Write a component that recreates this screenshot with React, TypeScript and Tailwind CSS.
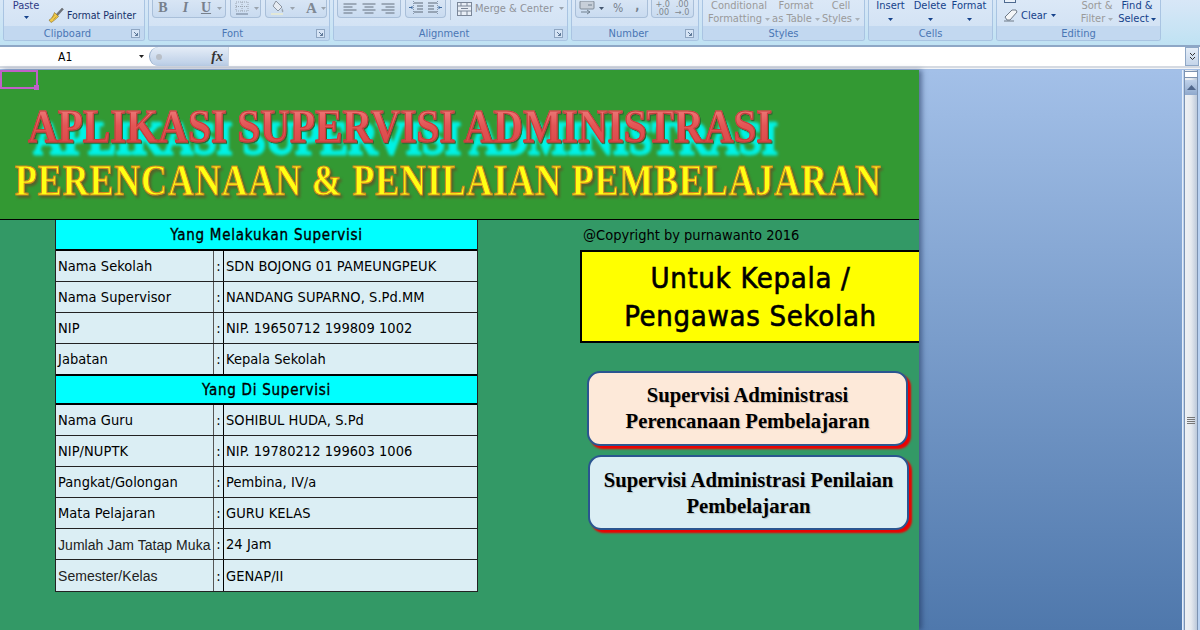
import React from "react";

const tahoma = "font-['DejaVu_Sans_Condensed','DejaVu_Sans',sans-serif]";

function Caret({ c = "#15428b", className = "" }: { c?: string; className?: string }) {
  return (
    <svg width="5" height="3" viewBox="0 0 5 3" className={className}>
      <path d="M0 0h5L2.5 3z" fill={c} />
    </svg>
  );
}

function Launcher() {
  return (
    <svg width="9" height="9" viewBox="0 0 9 9" className="mr-[4px] shrink-0">
      <rect x="0.5" y="0.5" width="8" height="8" fill="#d6e4f5" stroke="#8fa6c2" />
      <path d="M3 3l3.5 3.5M6.5 4v2.5H4" stroke="#5d7898" fill="none" />
    </svg>
  );
}

function Group({ w, label, launcher, children }: { w: string; label: string; launcher?: boolean; children?: React.ReactNode }) {
  return (
    <div className={`${w} h-[41px] flex flex-col shrink-0 rounded-b-[3px] border border-t-0 border-[#a9c4e2] bg-gradient-to-b from-[#dbe8f7] to-[#cfe0f3] overflow-hidden`}>
      <div className="h-[26px] relative flex">{children}</div>
      <div className="h-[14px] bg-[#c2d8f0] flex items-center">
        <span className="flex-1 text-center text-[#4a76b4] text-[11px] leading-[14px] mt-[1px]">{label}</span>
        {launcher && <Launcher />}
      </div>
    </div>
  );
}

function ToolGroup({ w, className = "", children }: { w: string; className?: string; children?: React.ReactNode }) {
  return (
    <div className={`${w} h-[19px] -mt-px flex items-center rounded-b-[4px] border border-t-0 border-[#a9bfd9] bg-gradient-to-b from-[#d9e6f5] to-[#c9dbf0] shrink-0 ${className}`}>
      {children}
    </div>
  );
}

function Lines({ kind }: { kind: "left" | "center" | "right" }) {
  const rows = [0, 1, 2, 3];
  const d = rows.map((i) => {
    const long = i % 2 === 0;
    const len = long ? 13 : 9;
    const x = kind === "left" ? 0.5 : kind === "right" ? 13.5 - len : 7 - len / 2;
    return `M${x} ${2 + i * 3}h${len}`;
  }).join("");
  return (
    <svg width="14" height="13" viewBox="0 0 14 13" className="shrink-0">
      <path d={d} stroke="#65707e" strokeWidth="1" fill="none" />
    </svg>
  );
}

function Indent({ flip }: { flip?: boolean }) {
  return (
    <svg width="15" height="14" viewBox="0 0 15 14" className={`shrink-0 ${flip ? "-scale-x-100" : ""}`}>
      <path d="M5 2h9M8 5h6M8 8h6M5 11h9" stroke="#5f6a78" fill="none" />
      <path d="M4.5 0v14" stroke="#8798ad" strokeDasharray="1 1" />
      <path d="M0 6.5h3M3 5v3" stroke="#3f6aa0" fill="none" />
    </svg>
  );
}

function Ribbon() {
  return (
    <div className={`h-[45px] flex bg-gradient-to-b from-[#d8e7f7] to-[#bfe2f3] pl-[3px] gap-[3px] text-[#3d5d8f] ${tahoma} text-[11px] leading-[12px] overflow-hidden`}>
      <Group w="w-[142px]" label="Clipboard" launcher>
        <div className="w-[44px] flex flex-col items-center">
          <span className="text-[#303a86] mt-0">Paste</span>
          <Caret className="mt-[4px]" />
        </div>
        <svg width="16" height="16" viewBox="0 0 16 16" className="mt-[7px] shrink-0">
          <path d="M8 7.500L14 1l1.500 1.300L9.500 9z" fill="#6f747c" stroke="#555" strokeWidth=".4" />
          <path d="M1 13c3-1 4-4 5.500-7.500l4 4C8 12 5 14.500 3 15.500z" fill="#efc94a" stroke="#8a6b20" strokeWidth=".6" />
          <path d="M3.500 11l3-3M5.500 12.500l3-3" stroke="#a98420" strokeWidth=".6" />
        </svg>
        <span className="ml-[3px] mt-[9px] text-[10.500px] text-[#15306a] whitespace-nowrap">Format Painter</span>
      </Group>
      <Group w="w-[182px]" label="Font" launcher>
        <ToolGroup w="w-[74px]" className="ml-[3px]">
          <span className="w-[20px] text-center font-['Liberation_Serif',serif] font-bold text-[14px] text-[#77808c]">B</span>
          <span className="w-[25px] text-center font-['Liberation_Serif',serif] italic font-bold text-[14px] text-[#77808c]">I</span>
          <span className="w-[16px] text-center font-['Liberation_Serif',serif] font-bold text-[14px] text-[#77808c] underline">U</span>
          <Caret c="#9aa3ad" className="ml-[3px]" />
        </ToolGroup>
        <ToolGroup w="w-[31px]" className="ml-[4px] pl-[4px] gap-[4px]">
          <svg width="15" height="15" viewBox="0 0 15 15">
            <path d="M1 1h12v9H1zM1 5.500h12M7 1v9" stroke="#9aa4b1" strokeDasharray="1 1" fill="none" />
            <path d="M1 13h12" stroke="#6a7a90" />
          </svg>
          <Caret c="#9aa3ad" />
        </ToolGroup>
        <ToolGroup w="w-[62px]" className="ml-[4px] pl-[4px]">
          <svg width="15" height="16" viewBox="0 0 15 16">
            <path d="M6 1l6 6-4 4-5-5z" fill="#e6ebf2" stroke="#8c95a1" />
            <path d="M12 8c1 2 2 3 1 4s-2-2-1-4z" fill="#9aa3ad" />
            <path d="M1 14h12" stroke="#e3e8d8" strokeWidth="2" />
          </svg>
          <Caret c="#9aa3ad" className="ml-[5px]" />
          <span className="ml-[11px] font-['Liberation_Serif',serif] font-bold text-[15px] text-[#7f8994]">A</span>
          <Caret c="#9aa3ad" className="ml-[4px]" />
        </ToolGroup>
      </Group>
      <Group w="w-[235px]" label="Alignment" launcher>
        <ToolGroup w="w-[64px]" className="ml-[3px] justify-around px-[3px]">
          <Lines kind="left" /><Lines kind="center" /><Lines kind="right" />
        </ToolGroup>
        <ToolGroup w="w-[41px]" className="ml-[4px] justify-around px-[2px]">
          <Indent /><Indent flip />
        </ToolGroup>
        <div className="w-px h-[20px] bg-[#aebfd4] ml-[4px]" />
        <svg width="15" height="14" viewBox="0 0 15 14" className="ml-[6px] mt-[2px] shrink-0">
          <rect x=".5" y=".5" width="14" height="13" fill="#e8eef6" stroke="#7a8698" />
          <path d="M0 4h15M0 9h15M4 0v4M10 0v4M4 9v5M10 9v5M4 6.500h7" stroke="#7a8698" />
        </svg>
        <span className="ml-[3px] mt-[3px] text-[#90939a] whitespace-nowrap">Merge &amp; Center</span>
        <Caret c="#9aa3ad" className="ml-[6px] mt-[7px]" />
      </Group>
      <Group w="w-[128px]" label="Number" launcher>
        <ToolGroup w="w-[73px]" className="ml-[3px] pl-[3px]">
          <svg width="16" height="14" viewBox="0 0 16 14">
            <rect x="1" y="0" width="14" height="8" rx="1" fill="#c7cfd9" stroke="#7f8a97" />
            <path d="M2 11h9M8 9l3 2-3 2M9 4h4" stroke="#71808f" fill="none" />
          </svg>
          <Caret className="ml-[4px]" c="#44566f" />
          <span className="ml-[9px] text-[#77808c] text-[12px]">%</span>
          <span className="ml-[12px] text-[#77808c] font-bold text-[12px] -mt-[4px]">,</span>
        </ToolGroup>
        <ToolGroup w="w-[43px]" className="ml-[3px] justify-around px-[1px]">
          <span className="text-[9px] leading-[8px] text-[#80888f] text-center">+.0<br />.00</span>
          <span className="text-[9px] leading-[8px] text-[#80888f] text-center">.00<br />→.0</span>
        </ToolGroup>
      </Group>
      <Group w="w-[163px]" label="Styles">
        <div className="flex text-[#9a9a9a] pl-[1px] whitespace-nowrap">
          <div className="w-[70px] flex flex-col items-center">
            <span>Conditional</span>
            <span className="mt-[1px] flex items-center gap-[3px]">Formatting<Caret c="#aab0b8" /></span>
          </div>
          <div className="w-[44px] flex flex-col items-center">
            <span>Format</span>
            <span className="mt-[1px] flex items-center gap-[3px]">as Table<Caret c="#aab0b8" /></span>
          </div>
          <div className="w-[46px] flex flex-col items-center">
            <span>Cell</span>
            <span className="mt-[1px] flex items-center gap-[3px]">Styles<Caret c="#aab0b8" /></span>
          </div>
        </div>
      </Group>
      <Group w="w-[125px]" label="Cells">
        <div className="flex pl-[5px] text-[#15428b]">
          {["Insert", "Delete", "Format"].map((t, i) => (
            <div key={t} className={`${i === 0 ? "w-[33px]" : i === 1 ? "w-[44px]" : "w-[32px]"} ${i > 0 ? "ml-[1px]" : ""} flex flex-col items-center`}>
              <span>{t}</span>
              <Caret className="mt-[6px]" />
            </div>
          ))}
        </div>
      </Group>
      <Group w="w-[165px]" label="Editing">
        <div className="w-[79px] pl-[7px]">
          <div className="w-[12px] h-[3px] border border-t-0 border-[#4e6a90] bg-[#eaf1f9]" />
          <div className="flex items-center mt-[6px]">
            <svg width="14" height="13" viewBox="0 0 14 13">
              <path d="M1 8L8 1h4l1 2-7 8H3z" fill="#f4f6f8" stroke="#6f7a88" />
              <path d="M0 12h10" stroke="#6f7a88" />
            </svg>
            <span className="ml-[3px] text-[#15428b]">Clear</span>
            <Caret className="ml-[4px]" />
          </div>
        </div>
        <div className="w-[42px] flex flex-col items-center text-[#9a9a9a]">
          <span>Sort &amp;</span>
          <span className="mt-[1px] flex items-center gap-[3px]">Filter<Caret c="#aab0b8" /></span>
        </div>
        <div className="w-[38px] flex flex-col items-center text-[#15428b]">
          <span>Find &amp;</span>
          <span className="mt-[1px] flex items-center gap-[2px]">Select<Caret /></span>
        </div>
      </Group>
    </div>
  );
}

function FormulaBar() {
  return (
    <div className={`h-[25px] flex flex-col ${tahoma}`}>
      <div className="h-[2px] bg-[#8ea7c6]" />
      <div className="h-[19px] bg-white flex items-stretch">
        <div className="w-[149px] flex items-center pl-[58px] text-[12px] text-black">
          <span className="flex-1">A1</span>
          <Caret c="#222" className="mr-[5px]" />
        </div>
        <div className="w-[80px] rounded-l-[10px] border-l border-[#8ea7c6] bg-gradient-to-b from-[#e5edf7] to-[#bacde6] flex items-center pl-[6px] pr-[5px] justify-between border-r border-r-[#d0dae6]">
          <span className="w-[6px] h-[6px] rounded-full bg-[#b9bfc7]" />
          <span className="font-['Liberation_Serif',serif] italic text-[14px] text-[#333] font-bold">fx</span>
        </div>
        <div className="flex-1" />
        <div className="w-[14px] mr-[1px] border border-[#8ea7c6] bg-gradient-to-b from-[#e6eef8] to-[#c4d5ea] flex items-center justify-center">
          <svg width="7" height="9" viewBox="0 0 7 9">
            <path d="M1 1l2.500 2.500L6 1M1 5l2.500 2.500L6 5" stroke="#333" fill="none" />
          </svg>
        </div>
      </div>
      <div className="h-[3px] bg-[#d5dae2] border-b border-[#f2f4f7]" />
      <div className="h-[1px] bg-[#a2bde4]" />
    </div>
  );
}

function Row({ label, value, h = "h-[31px]", line = true, sans }: { label: string; value: string; h?: string; line?: boolean; sans?: boolean }) {
  return (
    <div className={`${h} flex bg-[#dbeef4] ${line ? "border-b border-[#222]" : ""}`}>
      <div className={`w-[158px] border-r border-[#555] pl-[2px] pt-[2px] flex items-center whitespace-nowrap overflow-hidden ${sans ? "font-['Liberation_Sans',sans-serif] text-[14px] text-[#222]" : ""}`}>{label}</div>
      <div className="w-[10px] border-r border-black pt-[2px] flex items-center justify-center">:</div>
      <div className="flex-1 pl-[2px] pt-[2px] flex items-center whitespace-nowrap">{value}</div>
    </div>
  );
}

function Header({ first, children }: { first?: boolean; children: React.ReactNode }) {
  return (
    <div className={`h-[31px] pt-[2px] bg-[#00ffff] border-black flex items-center justify-center text-[15px] tracking-[0.75px] [-webkit-text-stroke:0.35px_black] ${first ? "border-b-2" : "border-y-2"}`}>
      {children}
    </div>
  );
}

function Banner() {
  return (
    <div className="h-[150px] bg-[#339933] border-b-[1px] border-black pl-[15px] font-['Liberation_Serif',serif] font-bold whitespace-nowrap flex flex-col">
      <div className="ml-[13px] mt-[37px] h-[44px] w-fit origin-bottom scale-y-[1.15] text-[41px] leading-[44px] tracking-[0.1px] text-transparent bg-clip-text bg-gradient-to-b from-[#f18a8a] via-[#e25555] to-[#d84545] [-webkit-text-stroke:1px_#c73c3c] [filter:drop-shadow(1px_1px_0.5px_#2d6a33)_drop-shadow(5px_10px_1.5px_#00f2e6)]">
        APLIKASI SUPERVISI ADMINISTRASI
      </div>
      <div className="mt-[14px] h-[40px] w-fit origin-bottom scale-y-[1.21] text-[36px] leading-[40px] tracking-[0.82px] text-[#ffff14] [-webkit-text-stroke:1px_#d28a20] [filter:drop-shadow(2px_2px_1px_#56622a)]">
        PERENCANAAN &amp; PENILAIAN PEMBELAJARAN
      </div>
    </div>
  );
}

export default function App() {
  return (
    <div className="w-[1200px] h-[630px] overflow-hidden flex flex-col bg-white">
      <Ribbon />
      <FormulaBar />
      <div className="flex-1 flex min-h-0 bg-gradient-to-b from-[#a3c0e8] to-[#4f78ac] relative">
        <div className="w-[919px] h-full bg-[#339966] [box-shadow:3px_0_5px_rgba(30,50,90,0.55)] relative">
          <div className="absolute left-0 top-0 w-[38px] h-[19px] border-2 border-[#c060c8] z-10">
            <span className="absolute -right-[3px] -bottom-[3px] w-[5px] h-[5px] bg-[#c060c8]" />
          </div>
          <Banner />
          <div className={`flex ${tahoma} text-black`}>
            <div className="ml-[55px] w-[423px] border-x border-[#222] border-b text-[14.500px] tracking-[0.05px] shrink-0">
              <Header first>Yang Melakukan Supervisi</Header>
              <Row label="Nama Sekolah" value="SDN BOJONG 01 PAMEUNGPEUK" />
              <Row label="Nama Supervisor" value="NANDANG SUPARNO, S.Pd.MM" />
              <Row label="NIP" value="NIP. 19650712 199809 1002" />
              <Row label="Jabatan" value="Kepala Sekolah" h="h-[30px]" line={false} />
              <Header>Yang Di Supervisi</Header>
              <Row label="Nama Guru" value="SOHIBUL HUDA, S.Pd" />
              <Row label="NIP/NUPTK" value="NIP. 19780212 199603 1006" />
              <Row label="Pangkat/Golongan" value="Pembina, IV/a" />
              <Row label="Mata Pelajaran" value="GURU KELAS" />
              <Row label="Jumlah Jam Tatap Muka" value="24 Jam" sans />
              <Row label="Semester/Kelas" value="GENAP/II" line={false} sans />
            </div>
            <div className="ml-[102px] flex-1 flex flex-col min-w-0">
              <div className="h-[30px] pl-[3px] pt-[2px] flex items-center text-[14.500px] tracking-[0px] whitespace-nowrap">@Copyright by purnawanto 2016</div>
              <div className="h-[93px] bg-[#ffff00] border-y-2 border-l-2 border-black flex flex-col items-center justify-center text-[29px] leading-[38px] tracking-[0.7px] [-webkit-text-stroke:0.6px_black]">
                <span>Untuk Kepala /</span>
                <span>Pengawas Sekolah</span>
              </div>
              <div className="ml-[7px] mt-[28px] w-[321px] h-[75px] pb-[2px] rounded-[13px] border-2 border-[#2a5590] bg-[#fde9d9] [box-shadow:3px_3px_2px_#ee0000] flex flex-col items-center justify-center font-['Liberation_Serif',serif] font-bold text-[20.700px] leading-[26px] [text-shadow:1px_1px_1px_rgba(90,90,90,0.3)]">
                <span>Supervisi Administrasi</span>
                <span>Perencanaan Pembelajaran</span>
              </div>
              <div className="ml-[8px] mt-[9px] w-[321px] h-[75px] rounded-[13px] border-2 border-[#2a5590] bg-[#dbeef4] [box-shadow:3px_3px_2px_#ee0000] flex flex-col items-center justify-center font-['Liberation_Serif',serif] font-bold text-[20.700px] leading-[26px] [text-shadow:1px_1px_1px_rgba(90,90,90,0.3)]">
                <span>Supervisi Administrasi Penilaian</span>
                <span>Pembelajaran</span>
              </div>
            </div>
          </div>
        </div>
        <div className="flex-1" />
        <div className="w-[18px] h-full flex flex-col pl-px border-l border-[#e6eef8] shrink-0 bg-[#b9d2f2]">
          <div className="w-[14px] flex-1 flex flex-col bg-gradient-to-r from-[#eef1f4] via-[#e6eaef] to-[#bcc9da] border-x border-[#7d93b1]">
            <div className="h-[7px] mt-[1px] border-y border-[#7d93b1] bg-white" />
            <div className="h-[15px] mt-[2px] bg-gradient-to-b from-[#c0d2ea] to-[#8fa9cd] flex items-center justify-center">
              <svg width="9" height="5" viewBox="0 0 9 5"><path d="M4.500 0L9 5H0z" fill="#50678c" /></svg>
            </div>
            <div className="flex-1 flex flex-col gap-[1px] items-center pt-[322px]">
              <span className="w-[8px] h-px bg-[#777]" />
              <span className="w-[8px] h-px bg-[#777]" />
              <span className="w-[8px] h-px bg-[#777]" />
              <span className="w-[8px] h-px bg-[#777]" />
            </div>
          </div>
        </div>
      </div>
    </div>
  );
}
